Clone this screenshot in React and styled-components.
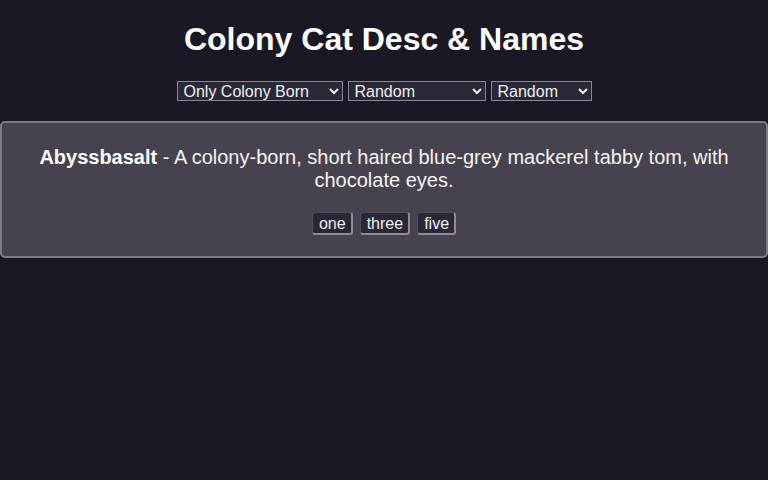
import React from "react";
import styled, { createGlobalStyle } from "styled-components";

const Global = createGlobalStyle`
  html, body {
    margin: 0;
    padding: 0;
    background: #1b1826;
    color: #f2f2f2;
    font-family: "Liberation Sans", Arial, sans-serif;
  }
`;

const Page = styled.main`
  display: flex;
  flex-direction: column;
  align-items: center;
`;

const Title = styled.h1`
  margin: 21px 0 0;
  font-size: 32px;
  line-height: 37px;
  font-weight: bold;
  color: #ffffff;
`;

const Filters = styled.div`
  display: flex;
  gap: 5px;
  margin-top: 23px;
`;

const Select = styled.select`
  width: ${(p) => p.$w}px;
  height: 20px;
  padding: 0 2px;
  background: #2a2737;
  color: #f0f0f0;
  border: 1px solid #8a8894;
  border-radius: 0;
  font-family: "Liberation Sans", Arial, sans-serif;
  font-size: 16px;
`;

const Card = styled.section`
  align-self: stretch;
  margin-top: 20px;
  box-sizing: border-box;
  height: 137px;
  background: #46434f;
  border: 2px solid #7f7c88;
  border-radius: 5px;
  padding: 23px 20px 0;
  text-align: center;
`;

const Desc = styled.p`
  margin: 0;
  font-size: 20px;
  line-height: 23px;
  color: #f4f4f4;
`;

const Name = styled.b`
  font-weight: bold;
  color: #ffffff;
`;

const Buttons = styled.div`
  display: flex;
  justify-content: center;
  gap: 7px;
  margin-top: 20px;
`;

const Btn = styled.button`
  box-sizing: border-box;
  height: 23px;
  padding: 0 5px 0 6px;
  background: #2a2838;
  color: #f0f0f0;
  border: 1px solid #514e5a;
  border-right: 2px solid #8e8c96;
  border-bottom: 2px solid #8e8c96;
  border-radius: 3px;
  font-family: "Liberation Sans", Arial, sans-serif;
  font-size: 16px;
  line-height: 19px;
`;

export default function App() {
  return (
    <>
      <Global />
      <Page>
        <Title>Colony Cat Desc &amp; Names</Title>
        <Filters>
          <Select $w={166} defaultValue="colony">
            <option value="colony">Only Colony Born</option>
            <option value="any">Any Origin</option>
          </Select>
          <Select $w={138} defaultValue="random">
            <option value="random">Random</option>
          </Select>
          <Select $w={101} defaultValue="random">
            <option value="random">Random</option>
          </Select>
        </Filters>
        <Card>
          <Desc>
            <Name>Abyssbasalt</Name> - A colony-born, short haired blue-grey
            mackerel tabby tom, with chocolate eyes.
          </Desc>
          <Buttons>
            <Btn>one</Btn>
            <Btn>three</Btn>
            <Btn>five</Btn>
          </Buttons>
        </Card>
      </Page>
    </>
  );
}
